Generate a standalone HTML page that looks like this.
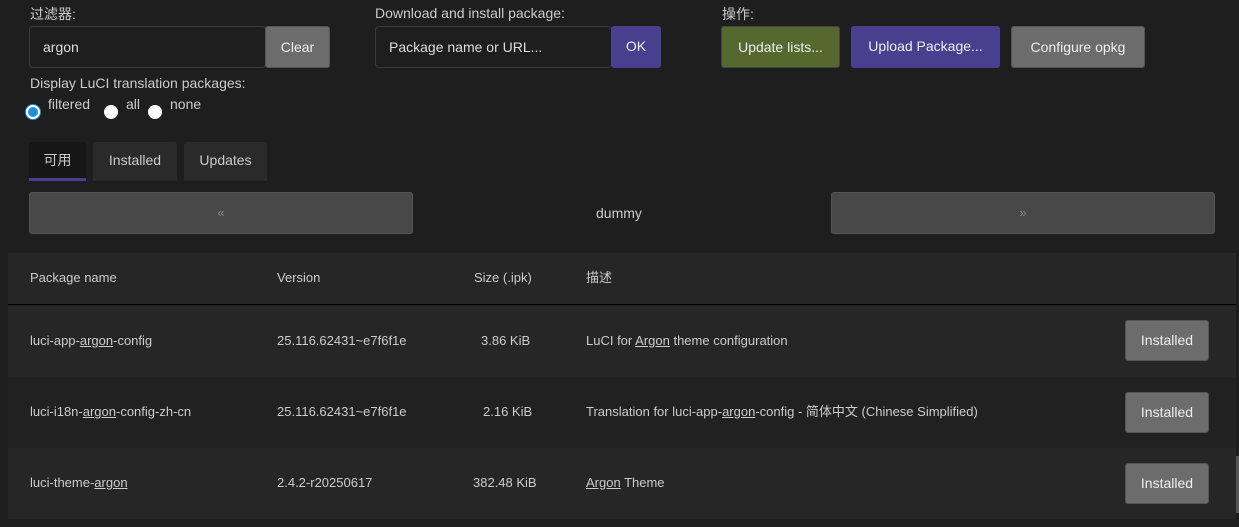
<!DOCTYPE html>
<html><head><meta charset="utf-8"><style>
*{box-sizing:border-box;margin:0;padding:0}
body{width:1239px;height:527px;background:#1e1e1e;color:#ddd;font-family:"Liberation Sans","Noto Sans CJK SC",sans-serif;font-size:14px;position:relative;overflow:hidden}
.a{position:absolute}
.lbl{font-size:14px;color:#ccc;line-height:18px}
.inp{border:1px solid #3a3a3a;border-radius:4px;background:#1e1e1e;color:#ddd;padding-left:13px;line-height:40px;font-size:14px}
.btn{border-radius:3px;text-align:center;line-height:40px;color:#eee;font-size:14px}
.tab{top:142px;height:39px;line-height:36px;text-align:center;background:#2a2a2a;border-radius:3px 3px 0 0;font-size:14px;color:#ccc}
.radio{width:14px;height:14px;border-radius:50%;background:#fff}
.row{left:8px;width:1228px;height:71px}
.c{font-size:13px;color:#ccc;line-height:16px;white-space:nowrap}
.ins{left:1125px;width:84px;height:41px;line-height:39px;background:#6c6c6c;border:1px solid #555;border-radius:3px;text-align:center;color:#eee;font-size:14px}
u{text-decoration:underline}
</style></head><body>
<div class="a lbl" style="left:30px;top:5px">过滤器:</div>
<div class="a inp" style="left:29px;top:26px;width:237px;height:42px">argon</div>
<div class="a btn" style="left:265px;top:26px;width:65px;height:42px;background:#6c6c6c;border:1px solid #555">Clear</div>
<div class="a lbl" style="left:30px;top:74px">Display LuCI translation packages:</div>
<div class="a radio" style="left:26px;top:105px;background:#1e90d8;border:2px solid #fff;box-shadow:0 0 0 1px #1e90d8"></div>
<div class="a lbl" style="left:48px;top:95px">filtered</div>
<div class="a radio" style="left:104px;top:105px"></div>
<div class="a lbl" style="left:126px;top:95px">all</div>
<div class="a radio" style="left:148px;top:105px"></div>
<div class="a lbl" style="left:170px;top:95px">none</div>

<div class="a lbl" style="left:375px;top:4px">Download and install package:</div>
<div class="a inp" style="left:375px;top:26px;width:237px;height:42px">Package name or URL...</div>
<div class="a btn" style="left:611px;top:26px;width:50px;height:42px;background:#4a3f8f">OK</div>
<div class="a lbl" style="left:722px;top:5px">操作:</div>
<div class="a btn" style="left:721px;top:26px;width:119px;height:42px;background:#55692e;border:1px solid #444">Update lists...</div>
<div class="a btn" style="left:851px;top:26px;width:149px;height:42px;background:#4a3f8f">Upload Package...</div>
<div class="a btn" style="left:1011px;top:26px;width:134px;height:42px;background:#6c6c6c;border:1px solid #555">Configure opkg</div>

<div class="a tab" style="left:29px;width:57px;background:#161616;border-bottom:3px solid #4a3f8f">可用</div>
<div class="a tab" style="left:93px;width:84px">Installed</div>
<div class="a tab" style="left:184px;width:83px">Updates</div>

<div class="a" style="left:29px;top:192px;width:384px;height:42px;background:#484848;border:1px solid #555;border-radius:3px;text-align:center;line-height:40px;color:#888;font-size:13px">«</div>
<div class="a lbl" style="left:596px;top:204px">dummy</div>
<div class="a" style="left:831px;top:192px;width:384px;height:42px;background:#484848;border:1px solid #555;border-radius:3px;text-align:center;line-height:40px;color:#888;font-size:13px">»</div>

<div class="a row" style="top:253px;height:52px;background:#262626;border-bottom:1px solid #000"></div>
<div class="a c" style="left:30px;top:270px">Package name</div>
<div class="a c" style="left:277px;top:270px">Version</div>
<div class="a c" style="left:474px;top:270px">Size (.ipk)</div>
<div class="a c" style="left:586px;top:270px">描述</div>

<div class="a row" style="top:306px;background:#262626"></div>
<div class="a c" style="left:30px;top:333px">luci-app-<u>argon</u>-config</div>
<div class="a c" style="left:277px;top:333px">25.116.62431~e7f6f1e</div>
<div class="a c" style="left:481px;top:333px">3.86 KiB</div>
<div class="a c" style="left:586px;top:333px">LuCI for <u>Argon</u> theme configuration</div>
<div class="a ins" style="top:320px">Installed</div>

<div class="a row" style="top:377px;background:#212121"></div>
<div class="a c" style="left:30px;top:404px">luci-i18n-<u>argon</u>-config-zh-cn</div>
<div class="a c" style="left:277px;top:404px">25.116.62431~e7f6f1e</div>
<div class="a c" style="left:483px;top:404px">2.16 KiB</div>
<div class="a c" style="left:586px;top:404px">Translation for luci-app-<u>argon</u>-config - 简体中文 (Chinese Simplified)</div>
<div class="a ins" style="top:392px">Installed</div>

<div class="a row" style="top:448px;background:#262626"></div>
<div class="a c" style="left:30px;top:475px">luci-theme-<u>argon</u></div>
<div class="a c" style="left:277px;top:475px">2.4.2-r20250617</div>
<div class="a c" style="left:473px;top:475px">382.48 KiB</div>
<div class="a c" style="left:586px;top:475px"><u>Argon</u> Theme</div>
<div class="a ins" style="top:463px">Installed</div>
<div class="a" style="left:1236px;top:456px;width:3px;height:57px;background:#555"></div>
</body></html>
